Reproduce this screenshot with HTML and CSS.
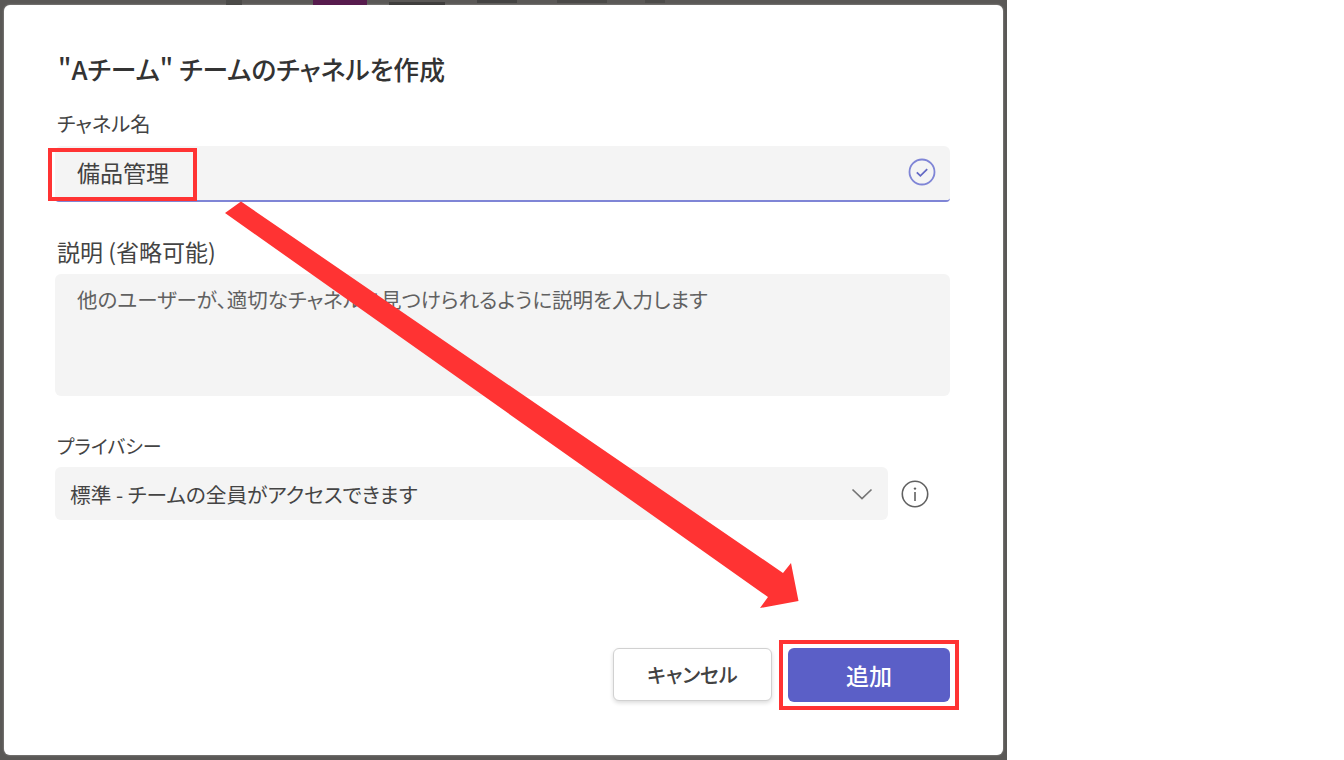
FILE: index.html
```html
<!DOCTYPE html>
<html lang="ja">
<head>
<meta charset="utf-8">
<title>チャネルを作成</title>
<link rel="stylesheet" href="styles.css">
</head>
<body>
<div class="page">
  <div class="backdrop">
    <div class="strip">
      <span class="chip chip-a"></span>
      <span class="chip chip-purple"></span>
      <span class="chip chip-b"></span>
      <span class="chip chip-c"></span>
      <span class="chip chip-d"></span>
      <span class="chip chip-e"></span>
    </div>
    <form class="dialog">
      <h1 class="title">"Aチーム" チームのチャネルを作成</h1>
      <label class="label label-name" for="name">チャネル名</label>
      <div class="name-field">
        <input class="name-input" id="name" type="text" value="備品管理">
        <svg class="check" width="28" height="28" viewBox="0 0 28 28" fill="none">
          <circle cx="14" cy="14" r="12.500" stroke="#7f85d6" stroke-width="1.800"/>
          <path d="M8.800 14.400l3.600 3.400 6.800-6.600" stroke="#6268c4" stroke-width="1.800"/>
        </svg>
      </div>
      <label class="label label-desc" for="desc">説明 (省略可能)</label>
      <textarea class="desc" id="desc" placeholder="他のユーザーが、適切なチャネルを見つけられるように説明を入力します"></textarea>
      <div class="label label-privacy">プライバシー</div>
      <div class="privacy-row">
        <div class="select">
          <span>標準 - チームの全員がアクセスできます</span>
          <svg width="22" height="12" viewBox="0 0 22 12" fill="none">
            <path d="M1.500 1.500L11 10.500l9.500-9" stroke="#757575" stroke-width="1.700"/>
          </svg>
        </div>
        <svg class="info" width="28" height="28" viewBox="0 0 28 28" fill="none">
          <circle cx="14" cy="14" r="12.700" stroke="#616161" stroke-width="1.600"/>
          <rect x="13.200" y="12" width="1.600" height="9" fill="#616161"/>
          <circle cx="14" cy="8.600" r="1.200" fill="#616161"/>
        </svg>
      </div>
      <div class="actions">
        <button class="btn btn-cancel" type="button">キャンセル</button>
        <button class="btn btn-add" type="button">追加</button>
      </div>
    </form>
  </div>
  <div class="mark mark-name"></div>
  <div class="mark mark-add"></div>
  <svg class="arrow" width="1007" height="760" viewBox="0 0 1007 760">
    <polygon fill="#ff3333" points="241,201.500 783,573 791,563 798.500,601 760,608 768,597 225,213"/>
  </svg>
</div>
</body>
</html>
```
FILE: styles.css
```css
* { box-sizing: border-box; }
html, body { margin: 0; padding: 0; background: #fff; }
body {
  font-family: "Noto Sans CJK JP", "Noto Sans", sans-serif;
  font-feature-settings: "palt";
  color: #424242;
}
.page { position: relative; width: 1344px; height: 760px; overflow: hidden; }
.backdrop {
  width: 1007px;
  height: 760px;
  background: #5a5856;
  padding: 0 3px 0 4px;
}
.strip { height: 5px; display: flex; align-items: flex-start; }
.chip { display: block; height: 5px; }
.chip-a { width: 16px; margin-left: 222px; background: #4b4a48; }
.chip-purple { width: 54px; margin-left: 71px; background: #571b4d; }
.chip-b { width: 56px; height: 3px; margin-left: 22px; margin-top: 2px; background: #3f3e3d; }
.chip-c { width: 40px; height: 3px; margin-left: 32px; background: #444342; }
.chip-d { width: 50px; height: 3px; margin-left: 40px; background: #4a4947; }
.chip-e { width: 20px; height: 3px; margin-left: 38px; background: #4c4b49; }
.dialog {
  width: 999px;
  height: 750px;
  background: #fff;
  border-radius: 6px;
  padding: 45px 53px 0 51px;
  display: flex;
  flex-direction: column;
  box-shadow: 0 0 2px rgba(255,255,255,.5);
}
.title {
  margin: 0;
  height: 38px;
  font-size: 25.800px;
  line-height: 38px;
  font-weight: 500;
  color: #333;
  padding-left: 3px;
}
.label {
  display: block;
  height: 32px;
  font-size: 20.300px;
  line-height: 32px;
  color: #444;
  padding-left: 2px;
}
.label-name { margin-top: 22px; height: 27px; line-height: 27px; }
.name-field {
  margin-top: 9px;
  height: 56px;
  background: #f4f4f4;
  border-radius: 6px 6px 4px 4px;
  border-bottom: 2px solid #7f85d6;
  display: flex;
  align-items: center;
  padding: 0 14px 2px 22px;
}
.name-input {
  flex: 1;
  min-width: 0;
  height: 44px;
  border: 0;
  padding: 0;
  outline: 0;
  background: transparent;
  font: inherit;
  font-feature-settings: "palt";
  font-size: 23px;
  color: #424242;
}
.check { display: block; flex: none; }
.label-desc { margin-top: 33px; height: 39px; line-height: 32px; font-size: 23px; }
.desc {
  display: block;
  width: 100%;
  height: 122px;
  border: 0;
  outline: 0;
  resize: none;
  background: #f4f4f4;
  border-radius: 6px;
  padding: 7px 22px;
  font: inherit;
  font-feature-settings: "palt";
  font-size: 20.500px;
  line-height: 36px;
  color: #616161;
}
.desc::placeholder { color: #616161; opacity: 1; }
.label-privacy { margin-top: 34px; height: 37px; line-height: 32px; font-size: 19px; }
.privacy-row { display: flex; align-items: center; gap: 13px; }
.select {
  width: 833px;
  height: 53px;
  background: #f4f4f4;
  border-radius: 6px;
  padding: 0 15px;
  display: flex;
  align-items: center;
  justify-content: space-between;
  font-size: 20.700px;
  color: #444;
}
.info { display: block; flex: none; }
.actions {
  margin-top: 128px;
  display: flex;
  justify-content: flex-end;
  gap: 16px;
}
.btn {
  font: inherit;
  font-feature-settings: "palt";
  font-size: 20px;
  font-weight: 500;
  height: 54px;
  border-radius: 6px;
  padding: 0;
  cursor: pointer;
}
.btn-cancel {
  width: 159px;
  height: 53px;
  background: #fff;
  border: 1px solid #d1d1d1;
  color: #424242;
  box-shadow: 0 2px 4px rgba(0,0,0,.14);
}
.btn-add {
  width: 162px;
  font-size: 23px;
  background: #5b5fc7;
  border: 0;
  color: #fff;
}
.mark { position: absolute; border: 4px solid #ff3333; }
.mark-name { left: 48px; top: 148px; width: 149px; height: 53px; }
.mark-add { left: 779px; top: 640px; width: 180px; height: 70px; }
.arrow { position: absolute; left: 0; top: 0; }
```
